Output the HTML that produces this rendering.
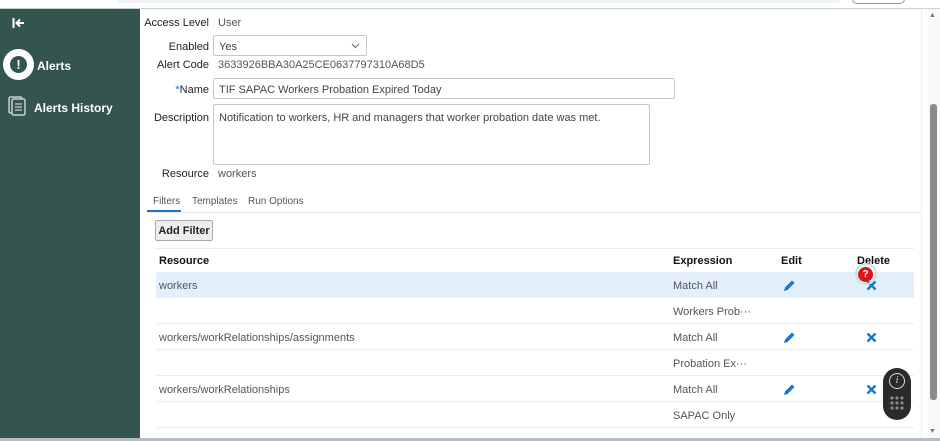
<!DOCTYPE html>
<html><head><style>
*{margin:0;padding:0;box-sizing:border-box}
body{width:940px;height:441px;overflow:hidden;background:#fff;font-family:"Liberation Sans",sans-serif;font-size:11px;color:#333;position:relative}
.abs{position:absolute}
.side{left:0;top:9px;width:140px;height:429px;background:#33544f;color:#fff}
.lbl{position:absolute;left:100px;width:109px;color:#222;text-align:right;white-space:nowrap}
.val{position:absolute;left:218px;color:#555;white-space:nowrap}
.inp{position:absolute;border:1px solid #c4c8cc;border-radius:2px;padding:5px 5px;color:#444;background:#fff}
.row{position:absolute;left:156px;width:758px;height:26px;border-bottom:1px solid #e8ecef}
.row span{position:absolute;top:8px;color:#555}
.row svg{position:absolute;top:7px}
</style></head><body>
<div class="abs" style="left:118px;top:0;width:722px;height:3px;background:#eef2f8;border-radius:0 0 6px 6px"></div>
<div class="abs" style="left:852px;top:-6px;width:53px;height:10px;border:1px solid #999;border-radius:5px"></div>
<div class="abs" style="left:0;top:8px;width:940px;height:1px;background:#c8d4d0"></div>
<div class="abs side">
 <svg class="abs" style="left:12px;top:8px" width="14" height="12" viewBox="0 0 14 12"><path d="M1.5 1v10M12 6H4.5M8 2.5L4.5 6 8 9.5" stroke="#fff" stroke-width="2" fill="none"/></svg>
 <div class="abs" style="left:3px;top:40px;width:31px;height:31px;border-radius:50%;background:#fff"></div>
 <div class="abs" style="left:10px;top:47px;width:17px;height:17px;border-radius:50%;background:#33544f;color:#fff;text-align:center;font-weight:bold;font-size:13px;line-height:17px">!</div>
 <div class="abs" style="left:37px;top:50px;font-size:12px;font-weight:bold">Alerts</div>
 <svg class="abs" style="left:8px;top:87px" width="18" height="20" viewBox="0 0 18 20"><rect x="1" y="1" width="13" height="16" rx="1.5" fill="none" stroke="#c8d0ce" stroke-width="1.5"/><rect x="4" y="3" width="13" height="16" rx="1.5" fill="#33544f" stroke="#c8d0ce" stroke-width="1.5"/><path d="M7 8h7M7 11h7M7 14h7" stroke="#c8d0ce" stroke-width="1.3"/></svg>
 <div class="abs" style="left:34px;top:92px;font-size:12px;font-weight:bold">Alerts History</div>
</div>
<div class="lbl" style="top:17px">Access Level</div><div class="val" style="top:17px">User</div>
<div class="lbl" style="top:41px">Enabled</div>
<div class="inp" style="left:213px;top:35px;width:154px;height:21px;padding-top:5px">Yes<svg style="position:absolute;right:6px;top:7px" width="9" height="6" viewBox="0 0 9 6"><path d="M1 1l3.5 3.5L8 1" stroke="#666" fill="none"/></svg></div>
<div class="lbl" style="top:59px">Alert Code</div><div class="val" style="top:59px">3633926BBA30A25CE0637797310A68D5</div>
<div class="lbl" style="top:84px"><span style="color:#1976c8">*</span>Name</div>
<div class="inp" style="left:213px;top:78px;width:462px;height:21px;padding-top:5px">TIF SAPAC Workers Probation Expired Today</div>
<div class="lbl" style="top:112px">Description</div>
<div class="inp" style="left:213px;top:104px;width:437px;height:61px;padding-top:7px">Notification to workers, HR and managers that worker probation date was met.</div>
<div class="lbl" style="top:168px">Resource</div><div class="val" style="top:168px">workers</div>
<div class="abs" style="left:153px;top:196px;color:#555;font-size:10px">Filters</div>
<div class="abs" style="left:192px;top:196px;color:#555;font-size:10px">Templates</div>
<div class="abs" style="left:248px;top:196px;color:#555;font-size:10px">Run Options</div>
<div class="abs" style="left:147px;top:210px;width:34px;height:2px;background:#1976c8"></div>
<div class="abs" style="left:147px;top:212px;width:774px;height:1px;background:#e4eaee"></div>
<div class="abs" style="left:155px;top:220px;width:58px;height:21px;border:1px solid #aaa;border-radius:2px;background:#eceeef;font-weight:bold;font-size:11px;line-height:20px;text-align:center;color:#222">Add Filter</div>
<div class="abs" style="left:155px;top:248px;width:759px;height:1px;background:#e8ecef"></div>
<div class="abs" style="left:159px;top:255px;font-weight:bold;color:#111">Resource</div>
<div class="abs" style="left:673px;top:255px;font-weight:bold;color:#111">Expression</div>
<div class="abs" style="left:781px;top:255px;font-weight:bold;color:#111">Edit</div>
<div class="abs" style="left:857px;top:255px;font-weight:bold;color:#111">Delete</div>
<div class="row" style="top:272px;background:#e3f0fc"><span style="left:3px">workers</span><span style="left:517px">Match All</span>
<svg style="left:627px" width="13" height="13" viewBox="0 0 13 13"><path d="M1 12l1-3.5 7-7 2.5 2.5-7 7z" fill="#1976c8"/></svg>
<svg style="left:710px;top:8px" width="11" height="11" viewBox="0 0 11 11"><path d="M1.5 1.5l8 8M9.5 1.5l-8 8" stroke="#1976c8" stroke-width="2.4"/></svg></div>
<div class="row" style="top:298px"><span style="left:517px">Workers Prob···</span></div>
<div class="row" style="top:324px"><span style="left:3px">workers/workRelationships/assignments</span><span style="left:517px">Match All</span>
<svg style="left:627px" width="13" height="13" viewBox="0 0 13 13"><path d="M1 12l1-3.5 7-7 2.5 2.5-7 7z" fill="#1976c8"/></svg>
<svg style="left:710px;top:8px" width="11" height="11" viewBox="0 0 11 11"><path d="M1.5 1.5l8 8M9.5 1.5l-8 8" stroke="#1976c8" stroke-width="2.4"/></svg></div>
<div class="row" style="top:350px"><span style="left:517px">Probation Ex···</span></div>
<div class="row" style="top:376px"><span style="left:3px">workers/workRelationships</span><span style="left:517px">Match All</span>
<svg style="left:627px" width="13" height="13" viewBox="0 0 13 13"><path d="M1 12l1-3.5 7-7 2.5 2.5-7 7z" fill="#1976c8"/></svg>
<svg style="left:710px;top:8px" width="11" height="11" viewBox="0 0 11 11"><path d="M1.5 1.5l8 8M9.5 1.5l-8 8" stroke="#1976c8" stroke-width="2.4"/></svg></div>
<div class="row" style="top:402px"><span style="left:517px">SAPAC Only</span></div>
<div class="abs" style="left:855px;top:263px;width:22px;height:22px;border-radius:50%;border:2px solid #bfe6dc"></div>
<div class="abs" style="left:858px;top:267px;width:15px;height:15px;border-radius:50%;background:#e0141e;color:#fff;font-size:10px;font-weight:bold;text-align:center;line-height:15px">?</div>
<div class="abs" style="left:883px;top:368px;width:28px;height:52px;border-radius:14px;background:#2a2a2a"></div>
<div class="abs" style="left:889px;top:373px;width:16px;height:16px;border-radius:50%;border:1.5px solid #ddd;color:#ddd;font-size:10px;font-style:italic;text-align:center;line-height:13px;font-family:'Liberation Serif',serif">i</div>
<svg class="abs" style="left:889px;top:395px" width="16" height="16" viewBox="0 0 16 16" fill="#888"><circle cx="3" cy="3" r="1.6"/><circle cx="8" cy="3" r="1.6"/><circle cx="13" cy="3" r="1.6"/><circle cx="3" cy="8" r="1.6"/><circle cx="8" cy="8" r="1.6"/><circle cx="13" cy="8" r="1.6"/><circle cx="3" cy="13" r="1.6"/><circle cx="8" cy="13" r="1.6"/><circle cx="13" cy="13" r="1.6"/></svg>
<div class="abs" style="left:921px;top:9px;width:1px;height:429px;background:#eee"></div>
<div class="abs" style="left:928px;top:9px;width:12px;height:429px;background:#f8f8f8"></div>
<div class="abs" style="left:930px;top:104px;width:7px;height:296px;border-radius:3px;background:#8a8a8a"></div>
<div class="abs" style="left:929px;top:12px;font-size:7px;color:#777">▲</div>
<div class="abs" style="left:929px;top:428px;font-size:7px;color:#777">▼</div>
<div class="abs" style="left:0;top:438px;width:940px;height:3px;background:#b8bcc0"></div>
</body></html>
